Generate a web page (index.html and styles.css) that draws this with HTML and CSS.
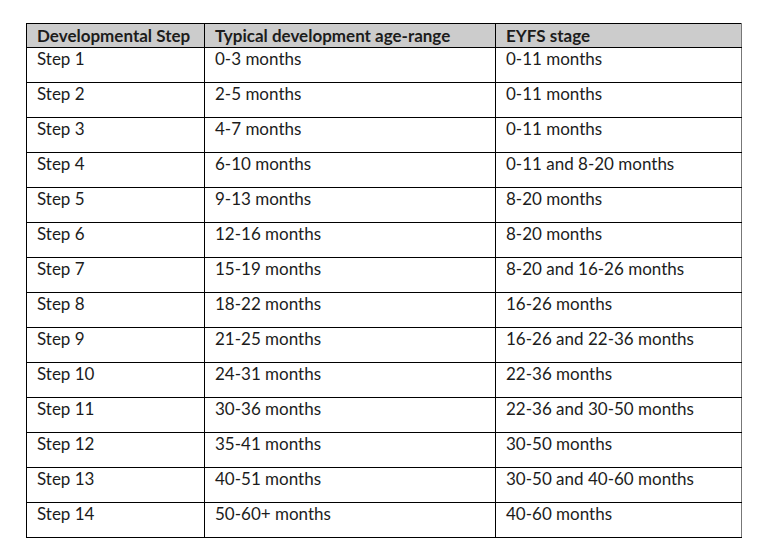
FILE: index.html
```html
<!DOCTYPE html>
<html>
<head>
<meta charset="utf-8">
<link rel="stylesheet" href="styles.css">
</head>
<body>
<table class="steps">
  <colgroup>
    <col class="c1"><col class="c2"><col class="c3">
  </colgroup>
  <thead>
    <tr><th>Developmental Step</th><th>Typical development age-range</th><th>EYFS stage</th></tr>
  </thead>
  <tbody>
    <tr><td>Step 1</td><td>0-3 months</td><td>0-11 months</td></tr>
    <tr><td>Step 2</td><td>2-5 months</td><td>0-11 months</td></tr>
    <tr><td>Step 3</td><td>4-7 months</td><td>0-11 months</td></tr>
    <tr><td>Step 4</td><td>6-10 months</td><td>0-11 and 8-20 months</td></tr>
    <tr><td>Step 5</td><td>9-13 months</td><td>8-20 months</td></tr>
    <tr><td>Step 6</td><td>12-16 months</td><td>8-20 months</td></tr>
    <tr><td>Step 7</td><td>15-19 months</td><td>8-20 and 16-26 months</td></tr>
    <tr><td>Step 8</td><td>18-22 months</td><td>16-26 months</td></tr>
    <tr><td>Step 9</td><td>21-25 months</td><td>16-26 and 22-36 months</td></tr>
    <tr><td>Step 10</td><td>24-31 months</td><td>22-36 months</td></tr>
    <tr><td>Step 11</td><td>30-36 months</td><td>22-36 and 30-50 months</td></tr>
    <tr><td>Step 12</td><td>35-41 months</td><td>30-50 months</td></tr>
    <tr><td>Step 13</td><td>40-51 months</td><td>30-50 and 40-60 months</td></tr>
    <tr><td>Step 14</td><td>50-60+ months</td><td>40-60 months</td></tr>
  </tbody>
</table>
</body>
</html>
```
FILE: styles.css
```css
html, body {
  margin: 0;
  padding: 0;
  background: #ffffff;
}
body {
  font-family: "Lato", "Open Sans", sans-serif;
  font-size: 17px;
  color: #1c1c1c;
}
.steps {
  margin: 23px 0 0 26px;
  border-collapse: collapse;
  table-layout: fixed;
  width: 715px;
}
.c1 { width: 178px; }
.c2 { width: 291px; }
.c3 { width: 246px; }
.steps th,
.steps td {
  border: 1px solid #000;
  padding: 0 0 0 10px;
  text-align: left;
  vertical-align: top;
  white-space: nowrap;
  overflow: hidden;
}
.steps th {
  background: #cccccc;
  font-weight: 700;
  height: 23px;
  line-height: 23px;
}
.steps td {
  height: 34px;
  line-height: 22px;
}
.steps tr > :last-child {
  border-right-color: #777;
}
```
